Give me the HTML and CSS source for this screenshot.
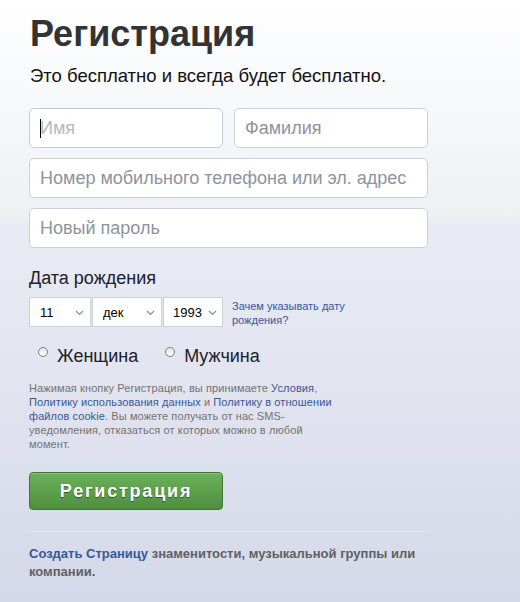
FILE: index.html
```html
<!DOCTYPE html>
<html lang="ru">
<head>
<meta charset="utf-8">
<title>Регистрация</title>
<link rel="stylesheet" href="styles.css">
</head>
<body>
<div class="page">
  <h1 class="title">Регистрация</h1>
  <p class="subtitle">Это бесплатно и всегда будет бесплатно.</p>

  <div class="fields">
    <div class="name-row">
      <div class="field focused">
        <input class="input input-light" type="text" placeholder="Имя">
        <span class="caret"></span>
      </div>
      <div class="field">
        <input class="input" type="text" placeholder="Фамилия">
      </div>
    </div>
    <input class="input" type="text" placeholder="Номер мобильного телефона или эл. адрес">
    <input class="input" type="password" placeholder="Новый пароль">
  </div>

  <div class="birth-label">Дата рождения</div>
  <div class="birth-row">
    <div class="selects">
      <div class="select sel-day"><span>11</span><svg class="chev" width="9" height="6" viewBox="0 0 9 6"><path d="M1 1l3.5 3.5L8 1" fill="none" stroke="#8a8d91" stroke-width="1.2"/></svg></div>
      <div class="select sel-month"><span>дек</span><svg class="chev" width="9" height="6" viewBox="0 0 9 6"><path d="M1 1l3.5 3.5L8 1" fill="none" stroke="#8a8d91" stroke-width="1.2"/></svg></div>
      <div class="select sel-year"><span>1993</span><svg class="chev" width="9" height="6" viewBox="0 0 9 6"><path d="M1 1l3.5 3.5L8 1" fill="none" stroke="#8a8d91" stroke-width="1.2"/></svg></div>
    </div>
    <a class="why-link" href="#">Зачем указывать дату рождения?</a>
  </div>

  <div class="gender-row">
    <label class="radio"><span class="dot"></span><span class="radio-text">Женщина</span></label>
    <label class="radio"><span class="dot"></span><span class="radio-text">Мужчина</span></label>
  </div>

  <p class="terms">Нажимая кнопку Регистрация, вы принимаете <a href="#">Условия</a>, <a href="#">Политику использования данных</a> и <a href="#">Политику в отношении файлов cookie</a>. Вы можете получать от нас SMS-уведомления, отказаться от которых можно в любой момент.</p>

  <button class="submit" type="button">Регистрация</button>

  <div class="separator"></div>

  <p class="page-note"><a href="#">Создать Страницу</a> знаменитости, музыкальной группы или компании.</p>
</div>
</body>
</html>
```

FILE: styles.css
```css
html, body {
  margin: 0;
  padding: 0;
}
body {
  width: 520px;
  min-height: 602px;
  background: linear-gradient(to bottom, #ffffff 0px, #f6f7fa 120px, #eef0f4 215px, #e9ebf4 225px, #e1e3ef 400px, #d4d8e8 602px);
  font-family: "Liberation Sans", Arial, sans-serif;
  color: #1d2129;
}
.page {
  padding: 12px 0 0 29px;
  width: 399px;
}
.title {
  margin: 0;
  font-size: 36px;
  line-height: 44px;
  font-weight: bold;
  color: #333333;
  padding-left: 1px;
}
.subtitle {
  margin: 8px 0 0;
  font-size: 18.5px;
  line-height: 24px;
  color: #111111;
  padding-left: 1px;
}
.fields {
  margin-top: 20px;
  display: flex;
  flex-direction: column;
  gap: 10px;
}
.name-row {
  display: grid;
  grid-template-columns: 194px 194px;
  column-gap: 11px;
}
.field {
  position: relative;
}
.input {
  box-sizing: border-box;
  display: block;
  width: 100%;
  height: 40px;
  margin: 0;
  padding: 0 10px;
  border: 1px solid #ccd0d5;
  border-radius: 5px;
  background: #ffffff;
  font-family: "Liberation Sans", Arial, sans-serif;
  font-size: 18px;
  color: #1d2129;
  outline: none;
}
.input::placeholder {
  color: #8d949e;
}
.input-light::placeholder {
  color: #b4b8bf;
}
.focused .input {
  border-color: #c6cbd2;
}
.caret {
  position: absolute;
  left: 11px;
  top: 11px;
  width: 1px;
  height: 19px;
  background: #000000;
}
.birth-label {
  margin-top: 20px;
  font-size: 18px;
  line-height: 20px;
  color: #1d2129;
}
.birth-row {
  margin-top: 9px;
  display: flex;
  align-items: flex-start;
}
.selects {
  display: flex;
  gap: 1px;
}
.select {
  box-sizing: border-box;
  height: 30px;
  border: 1px solid #ccd0d5;
  background: #ffffff;
  display: flex;
  align-items: center;
  justify-content: space-between;
  padding: 0 6px 0 10px;
  font-size: 13px;
  color: #000000;
}
.sel-day { width: 62px; }
.sel-month { width: 70px; }
.sel-year { width: 60px; padding-left: 9px; padding-right: 5px; }
.chev {
  display: block;
  margin-top: 1px;
}
.why-link {
  margin-left: 9px;
  margin-top: 2px;
  width: 125px;
  font-size: 11px;
  line-height: 14px;
  color: #365899;
  text-decoration: none;
}
.gender-row {
  margin-top: 18px;
  display: flex;
  gap: 27px;
  padding-left: 9px;
}
.radio {
  display: flex;
  align-items: flex-start;
  gap: 9px;
}
.dot {
  box-sizing: border-box;
  width: 10px;
  height: 10px;
  margin-top: 2px;
  border-radius: 50%;
  border: 1px solid #7a7e85;
  background: linear-gradient(#e6e6e6, #ffffff);
}
.radio-text {
  font-size: 18px;
  line-height: 22px;
  color: #1d2129;
}
.terms {
  margin: 14px 0 0;
  width: 312px;
  font-size: 11px;
  line-height: 14px;
  letter-spacing: 0.1px;
  color: #737373;
}
.terms a {
  color: #365899;
  text-decoration: none;
}
.submit {
  display: block;
  margin-top: 21px;
  box-sizing: border-box;
  width: 194px;
  height: 38px;
  border: 1px solid #3e7733;
  border-radius: 4px;
  background: linear-gradient(to bottom, #6bb15a 0%, #5ea04d 50%, #4f8e3f 100%);
  box-shadow: inset 0 1px 0 rgba(255,255,255,0.25);
  color: #ffffff;
  font-family: "Liberation Sans", Arial, sans-serif;
  font-size: 18px;
  font-weight: bold;
  letter-spacing: 1.8px;
  text-shadow: 0 1px 1px rgba(0,0,0,0.45);
  padding: 0;
}
.separator {
  margin-top: 21px;
  height: 1px;
  background: #e3e6ee;
  width: 401px;
  margin-left: -2px;
}
.page-note {
  margin: 13px 0 0;
  font-size: 13px;
  line-height: 18px;
  font-weight: bold;
  color: #5e6166;
  width: 399px;
}
.page-note a {
  color: #365899;
  text-decoration: none;
}
```
